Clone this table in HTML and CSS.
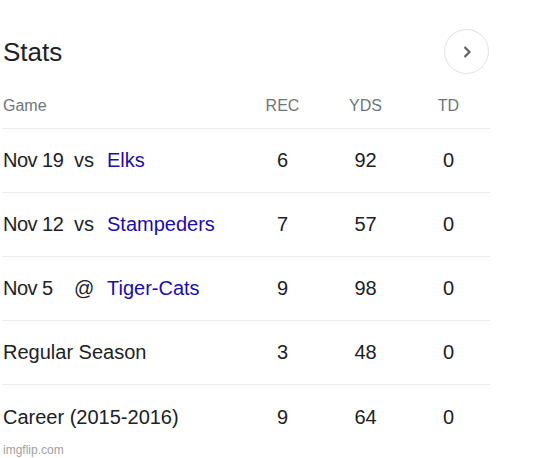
FILE: index.html
```html
<!DOCTYPE html>
<html lang="en">
<head>
    <meta charset="UTF-8">
    <meta name="viewport" content="width=device-width, initial-scale=1.0">
    <title>Stats</title>
    <link rel="stylesheet" href="styles.css">
</head>
<body>
    <div class="card">
        <div class="card-head">
            <h2 class="title">Stats</h2>
            <div class="next-btn">
                <svg width="14" height="14" viewBox="0 0 14 14">
                    <path d="M4.5 2 L9.5 7 L4.5 12" fill="none" stroke="#5f6368" stroke-width="2.2"/>
                </svg>
            </div>
        </div>

        <div class="stats-table">
            <div class="row head">
                <div class="cell game">Game</div>
                <div class="cell num">REC</div>
                <div class="cell num">YDS</div>
                <div class="cell num">TD</div>
            </div>
            <div class="row">
                <div class="cell game"><span class="date">Nov 19</span><span class="where">vs</span><a class="team">Elks</a></div>
                <div class="cell num">6</div>
                <div class="cell num">92</div>
                <div class="cell num">0</div>
            </div>
            <div class="row">
                <div class="cell game"><span class="date">Nov 12</span><span class="where">vs</span><a class="team">Stampeders</a></div>
                <div class="cell num">7</div>
                <div class="cell num">57</div>
                <div class="cell num">0</div>
            </div>
            <div class="row">
                <div class="cell game"><span class="date">Nov 5</span><span class="where">@</span><a class="team">Tiger-Cats</a></div>
                <div class="cell num">9</div>
                <div class="cell num">98</div>
                <div class="cell num">0</div>
            </div>
            <div class="row">
                <div class="cell game">Regular Season</div>
                <div class="cell num">3</div>
                <div class="cell num">48</div>
                <div class="cell num">0</div>
            </div>
            <div class="row last">
                <div class="cell game">Career (2015-2016)</div>
                <div class="cell num">9</div>
                <div class="cell num">64</div>
                <div class="cell num">0</div>
            </div>
        </div>
    </div>
    <p class="watermark">imgflip.com</p>
</body>
</html>
```

FILE: styles.css
```css
* {
    box-sizing: border-box;
}
body {
    margin: 0;
    background: #fff;
    font-family: "Liberation Sans", Arial, sans-serif;
    color: #202124;
}
.card {
    width: 490px;
    padding: 29px 0 0 3px;
}
.card-head {
    display: flex;
    align-items: center;
    justify-content: space-between;
    height: 45px;
}
.title {
    margin: 0;
    padding-top: 2px;
    font-size: 26px;
    font-weight: 400;
    color: #202124;
}
.next-btn {
    width: 45px;
    height: 45px;
    margin-right: 1px;
    border: 1px solid #dfe1e5;
    border-radius: 50%;
    display: flex;
    align-items: center;
    justify-content: center;
}
.stats-table {
    margin-top: 9px;
}
.row {
    display: grid;
    grid-template-columns: 1fr 83px 83px 83px;
    align-items: center;
    height: 64px;
    border-bottom: 1px solid #ebebeb;
    font-size: 20px;
}
.row.head {
    height: 46px;
    font-size: 16px;
    color: #70757a;
}
.row.last {
    border-bottom: none;
}
.num {
    text-align: center;
}
.date {
    display: inline-block;
    width: 71px;
    letter-spacing: -0.5px;
}
.where {
    display: inline-block;
    width: 33px;
}
.team {
    color: #1a0dab;
    text-decoration: none;
}
.watermark {
    margin: -6px 0 0 3px;
    font-size: 12px;
    color: #a0a0a0;
}
```
